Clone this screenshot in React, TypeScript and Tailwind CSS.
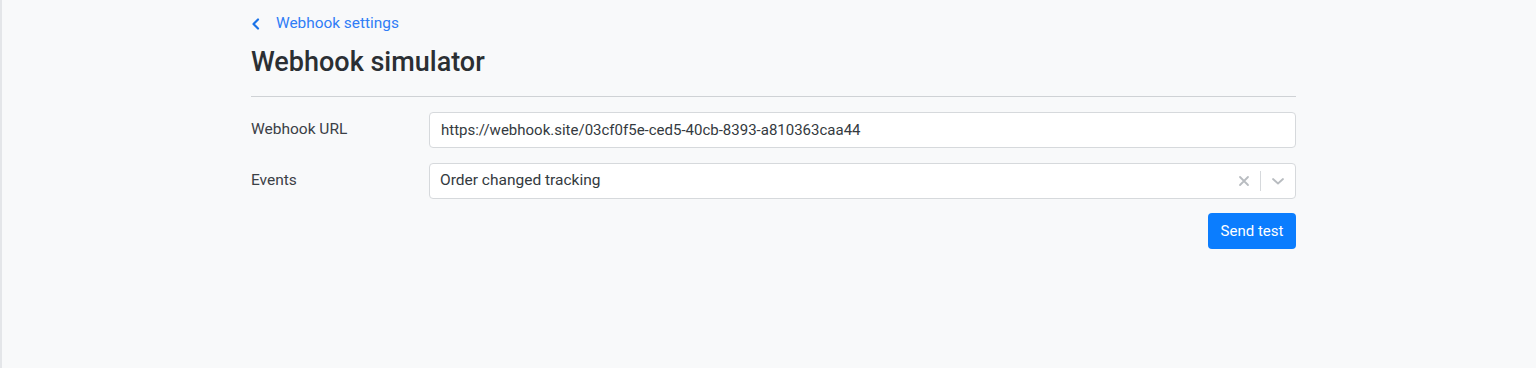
import React from "react";

export default function App() {
  return (
    <div
      className="min-h-[368px] bg-[#f8f9fa] border-l-2 border-[#e4e6e9] text-[#343a40]"
      style={{ fontFamily: "Roboto, 'Noto Sans', sans-serif" }}
    >
      <div className="w-[1045px] ml-[249px] pt-[14px]">
        <a href="#" className="flex items-center h-[20px] text-[15.4px] text-[#2f7df6]">
          <svg width="10" height="12" viewBox="0 0 10 12" className="mr-[15px]">
            <path d="M7 1.5 L2.5 6 L7 10.5" fill="none" stroke="#1a73e8" strokeWidth="2.2" strokeLinecap="round" strokeLinejoin="round" />
          </svg>
          Webhook settings
        </a>
        <h1 className="mt-[12px] text-[27px] leading-[32px] font-medium text-[#2b2f33]">Webhook simulator</h1>
        <div className="mt-[18px] border-t border-[#cfd2d5]" />

        <div className="mt-[15px] flex flex-col gap-[15px]">
          <div className="flex items-center">
            <label className="w-[178px] text-[15.5px] text-[#3b4046]">Webhook URL</label>
            <input
              readOnly
              value="https://webhook.site/03cf0f5e-ced5-40cb-8393-a810363caa44"
              className="flex-1 h-[36px] px-[11px] bg-white border border-[#d6d9dc] rounded-[4px] text-[15px] text-[#343a40] outline-none"
            />
          </div>
          <div className="flex items-center">
            <label className="w-[178px] text-[15.5px] text-[#3b4046]">Events</label>
            <div className="flex-1 h-[36px] flex items-center bg-white border border-[#d6d9dc] rounded-[4px]">
              <span className="flex-1 pl-[10px] text-[15.5px] text-[#343a40]">Order changed tracking</span>
              <div className="flex items-center">
                <svg width="12" height="12" viewBox="0 0 12 12" className="mr-[10px]">
                  <path d="M2 2 L10 10 M10 2 L2 10" stroke="#b8bcc0" strokeWidth="1.8" strokeLinecap="round" />
                </svg>
                <div className="w-px h-[20px] bg-[#d6d9dc]" />
                <svg width="14" height="10" viewBox="0 0 14 10" className="mx-[10px]">
                  <path d="M2 3 L7 7.5 L12 3" fill="none" stroke="#b8bcc0" strokeWidth="1.8" strokeLinecap="round" strokeLinejoin="round" />
                </svg>
              </div>
            </div>
          </div>
        </div>

        <div className="flex justify-end mt-[14px]">
          <button className="h-[36px] w-[88px] rounded-[4px] bg-[#0b7dfe] text-white text-[15px]">Send test</button>
        </div>
      </div>
    </div>
  );
}
